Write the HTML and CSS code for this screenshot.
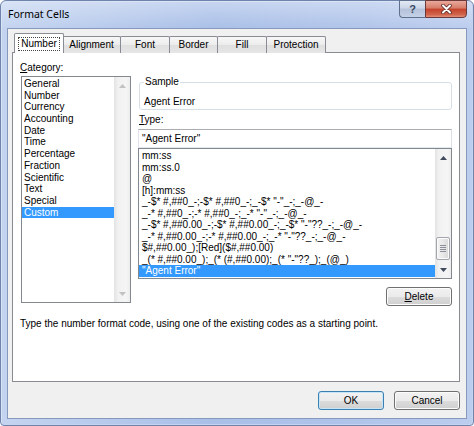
FILE: index.html
```html
<!DOCTYPE html>
<html>
<head>
<meta charset="utf-8">
<title>Format Cells</title>
<link rel="stylesheet" href="styles.css">
</head>
<body>
<div class="window">
  <div class="titlebar">
    <span class="title">Format Cells</span>
    <div class="caption-buttons">
      <div class="cap-btn help">?</div>
      <div class="cap-btn close">
        <svg width="13" height="10" viewBox="0 0 13 10"><path d="M3 1.5 L10 8.5 M10 1.5 L3 8.5" stroke="#5b2a24" stroke-width="3.6" stroke-linecap="round"/><path d="M3 1.5 L10 8.5 M10 1.5 L3 8.5" stroke="#fff" stroke-width="2" stroke-linecap="round"/></svg>
      </div>
    </div>
  </div>
  <div class="client">
    <div class="tabs">
      <div class="tab selected tab-number"><span class="focus">Number</span></div>
      <div class="tab tab-alignment">Alignment</div>
      <div class="tab tab-font">Font</div>
      <div class="tab tab-border">Border</div>
      <div class="tab tab-fill">Fill</div>
      <div class="tab tab-protection">Protection</div>
    </div>
    <div class="panel">
      <div class="columns">
        <div class="col-left">
          <div class="label"><u>C</u>ategory:</div>
          <div class="listbox category">
            <div class="items cat-items">
              <div class="item">General</div>
              <div class="item">Number</div>
              <div class="item">Currency</div>
              <div class="item">Accounting</div>
              <div class="item">Date</div>
              <div class="item">Time</div>
              <div class="item">Percentage</div>
              <div class="item">Fraction</div>
              <div class="item">Scientific</div>
              <div class="item">Text</div>
              <div class="item">Special</div>
              <div class="item sel">Custom</div>
            </div>
            <div class="vscroll disabled">
              <div class="arrow"><svg width="7" height="4" viewBox="0 0 7 4"><polygon points="0,4 3.5,0 7,4" fill="#c2c2c2"/></svg></div>
              <div class="track"></div>
              <div class="arrow"><svg width="7" height="4" viewBox="0 0 7 4"><polygon points="0,0 7,0 3.5,4" fill="#c2c2c2"/></svg></div>
            </div>
          </div>
        </div>
        <div class="col-right">
          <fieldset class="sample">
            <legend>Sample</legend>
            <div class="sample-value">Agent Error</div>
          </fieldset>
          <div class="label type-label"><u>T</u>ype:</div>
          <div class="textbox">"Agent Error"</div>
          <div class="listbox formats">
            <div class="items fmt-items">
              <div class="item">mm:ss</div>
              <div class="item">mm:ss.0</div>
              <div class="item">@</div>
              <div class="item">[h]:mm:ss</div>
              <div class="item">_-$* #,##0_-;-$* #,##0_-;_-$* "-"_-;_-@_-</div>
              <div class="item">_-* #,##0_-;-* #,##0_-;_-* "-"_-;_-@_-</div>
              <div class="item">_-$* #,##0.00_-;-$* #,##0.00_-;_-$* "-"??_-;_-@_-</div>
              <div class="item">_-* #,##0.00_-;-* #,##0.00_-;_-* "-"??_-;_-@_-</div>
              <div class="item">$#,##0.00_);[Red]($#,##0.00)</div>
              <div class="item">_(* #,##0.00_);_(* (#,##0.00);_(* "-"??_);_(@_)</div>
              <div class="item sel">"Agent Error"</div>
            </div>
            <div class="vscroll">
              <div class="arrow"><svg width="7" height="4" viewBox="0 0 7 4"><polygon points="0,4 3.5,0 7,4" fill="#404a5c"/></svg></div>
              <div class="track">
                <div class="thumb">
                  <svg width="6" height="7" viewBox="0 0 6 7"><path d="M0 0.5 H6 M0 2.5 H6 M0 4.5 H6 M0 6.5 H6" stroke="#8a8f99" stroke-width="1"/></svg>
                </div>
              </div>
              <div class="arrow"><svg width="7" height="4" viewBox="0 0 7 4"><polygon points="0,0 7,0 3.5,4" fill="#404a5c"/></svg></div>
            </div>
          </div>
          <div class="btn delete"><u>D</u>elete</div>
        </div>
      </div>
      <p class="hint">Type the number format code, using one of the existing codes as a starting point.</p>
    </div>
    <div class="footer">
      <div class="btn default">OK</div>
      <div class="btn">Cancel</div>
    </div>
  </div>
</div>
</body>
</html>
```

FILE: styles.css
```css
* { box-sizing: border-box; }
html, body { margin: 0; padding: 0; }
body {
  width: 474px;
  height: 426px;
  overflow: hidden;
  background: #ffffff;
  font-family: "Liberation Sans", Arial, sans-serif;
  font-size: 10px;
  color: #000;
}
.window {
  width: 474px;
  height: 426px;
  display: flex;
  flex-direction: column;
  border: 1px solid #6f84ad;
  border-radius: 6px 6px 4px 4px;
  background:
    linear-gradient(to bottom, rgba(255,255,255,0.35), rgba(255,255,255,0) 28px),
    linear-gradient(to right, #c4d4f0, #a9bfe8 45%, #b0c4ea 75%, #bccdee);
  box-shadow: inset 1px 1px 0 #dbe4f6, inset -1px -1px 0 #c7d4f0;
}
.titlebar {
  height: 27px;
  display: flex;
  align-items: flex-start;
  padding-left: 7px;
}
.title {
  font-family: "Noto Sans", "Liberation Sans", sans-serif;
  font-size: 10.5px;
  line-height: 14px;
  margin-top: 6px;
  color: #000;
}
.caption-buttons {
  margin-left: auto;
  margin-right: 6px;
  margin-top: -1px;
  display: flex;
}
.cap-btn {
  height: 18px;
  border: 1px solid #5f6f8e;
  display: flex;
  align-items: center;
  justify-content: center;
}
.help {
  width: 26px;
  border-right: none;
  border-radius: 0 0 0 4px;
  background: linear-gradient(#e4eaf4, #c9d4e6 45%, #b4c2da 50%, #c4d1e6);
  color: #3a4761;
  font-weight: bold;
  font-size: 11px;
  line-height: 14px;
}
.close {
  width: 42px;
  border-color: #6a3a3a;
  border-radius: 0 0 4px 0;
  background: linear-gradient(#eaa99b, #d67c68 45%, #c4412a 50%, #d1644c 85%, #e4907b);
}
.client {
  flex: 1;
  margin: 0 6px 6px 6px;
  background: #f0f0f0;
  border: 1px solid #8798bd;
  display: flex;
  flex-direction: column;
}
.tabs {
  display: flex;
  align-items: flex-end;
  height: 20px;
  margin: 4px 0 0 6px;
  position: relative;
  z-index: 1;
}
.tab {
  flex: none;
  height: 17px;
  padding: 0;
  margin-left: -1px;
  border: 1px solid #898c95;
  border-bottom: none;
  border-radius: 2px 2px 0 0;
  background: linear-gradient(#f7f7f7, #ececec 50%, #dfdfdf 50%, #e6e6e6);
  text-align: center;
  line-height: 15px;
  white-space: nowrap;
}
.tab.selected {
  height: 20px;
  margin-left: 0;
  margin-right: -1px;
  padding-top: 2px;
  background: #fff;
  position: relative;
  z-index: 2;
}
.tab-number { width: 50px; }
.tab-alignment { width: 59px; }
.tab-font { width: 50px; }
.tab-border { width: 49px; }
.tab-fill { width: 50px; }
.tab-protection { width: 60px; }
.focus {
  display: inline-block;
  border: 1px dotted #444;
  padding: 0 2px;
  line-height: 12px;
}
.panel {
  flex: 1;
  margin: -1px 6px 0 4px;
  background: #fff;
  border: 1px solid #898c95;
  padding: 9px 7px 0 7px;
}
.columns {
  display: flex;
  gap: 7px;
}
.col-left {
  width: 111px;
}
.col-right {
  flex: 1;
  display: flex;
  flex-direction: column;
}
.label {
  height: 12px;
  line-height: 12px;
}
.listbox {
  border: 1px solid #828790;
  background: #fff;
  display: flex;
  overflow: hidden;
}
.listbox.category {
  margin: 2px 0 0 1px;
  height: 227px;
}
.items {
  flex: 1;
  min-width: 0;
  padding-top: 1px;
}
.item {
  white-space: nowrap;
  overflow: hidden;
}
.cat-items .item {
  height: 11.7px;
  line-height: 11.7px;
  padding-left: 2px;
}
.fmt-items .item {
  height: 11.5px;
  line-height: 11.5px;
  padding-left: 3px;
}
.item.sel {
  background: #3399ff;
  color: #fff;
}
.vscroll {
  width: 16px;
  display: flex;
  flex-direction: column;
  background: linear-gradient(to right, #e3e3e3, #f1f1f1 25%, #f5f5f5 75%, #ededed);
}
.arrow {
  height: 17px;
  display: flex;
  align-items: center;
  justify-content: center;
}
.track {
  flex: 1;
  display: flex;
  flex-direction: column;
  justify-content: flex-end;
  padding: 0 1px 1px 1px;
}
.thumb {
  height: 23px;
  border: 1px solid #a3a6ad;
  border-radius: 2px;
  background: linear-gradient(to right, #f4f4f4, #e8e8e8 50%, #d9d9d9);
  box-shadow: inset 0 0 0 1px #fbfbfb;
  display: flex;
  align-items: center;
  justify-content: center;
}
.sample {
  margin: 14px 0 0 1px;
  padding: 8px 4px 1px 4px;
  border: 1px solid #d5dfe5;
  border-radius: 3px;
  min-width: 0;
}
.sample legend {
  padding: 0 1px;
  line-height: 12px;
}
.sample-value {
  line-height: 12px;
}
.type-label {
  margin-top: 4px;
  padding-left: 1px;
}
.textbox {
  margin-top: 3px;
  height: 19px;
  border: 1px solid #abadb3;
  border-color: #abadb3 #dbdfe6 #e3e9ef #e2e3ea;
  padding-left: 3px;
  line-height: 17px;
  background: #fff;
}
.listbox.formats {
  height: 131px;
}
.btn {
  width: 66px;
  height: 19px;
  border: 1px solid #707070;
  border-radius: 3px;
  background: linear-gradient(#f2f2f2, #ebebeb 50%, #dddddd 50%, #cfcfcf);
  box-shadow: inset 0 0 0 1px #fcfcfc;
  text-align: center;
  line-height: 17px;
}
.btn.default {
  border-color: #3c7fb1;
  box-shadow: inset 0 0 0 1px #c6e6f8;
}
.delete {
  align-self: flex-end;
  margin-top: 8px;
}
.hint {
  margin: 12px 0 0 0;
  line-height: 12px;
}
.footer {
  height: 36px;
  display: flex;
  justify-content: flex-end;
  gap: 10px;
  padding: 9px 6px 0 0;
}
```
